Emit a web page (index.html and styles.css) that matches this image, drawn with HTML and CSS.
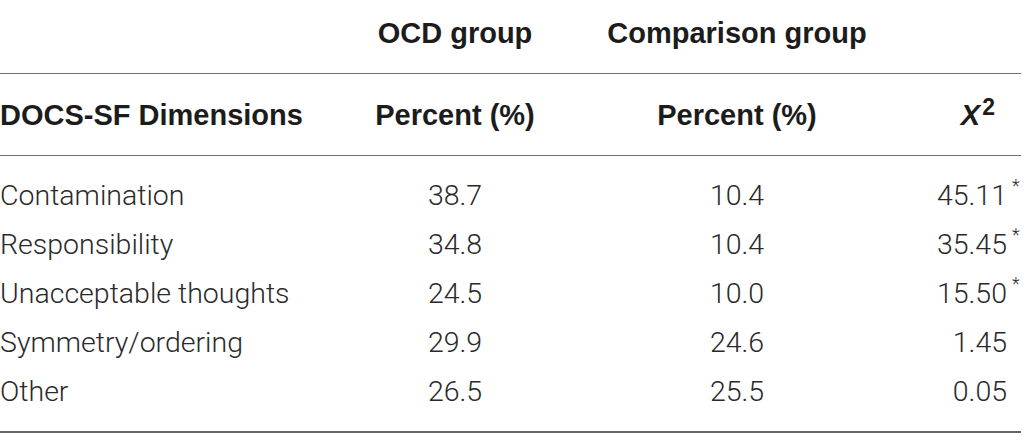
FILE: index.html
```html
<!DOCTYPE html>
<html>
<head>
<meta charset="utf-8">
<link rel="stylesheet" href="styles.css">
</head>
<body>
<table class="data">
  <colgroup>
    <col class="c1"><col class="c2"><col class="c3"><col class="c4">
  </colgroup>
  <thead>
    <tr class="group-row">
      <th></th>
      <th class="center">OCD group</th>
      <th class="center">Comparison group</th>
      <th></th>
    </tr>
    <tr class="label-row">
      <th class="left">DOCS-SF Dimensions</th>
      <th class="center">Percent (%)</th>
      <th class="center">Percent (%)</th>
      <th class="right chi"><i>X</i><sup class="sq">2</sup></th>
    </tr>
  </thead>
  <tbody>
    <tr><td class="left">Contamination</td><td class="center">38.7</td><td class="center">10.4</td><td class="right num">45.11<sup class="star">*</sup></td></tr>
    <tr><td class="left">Responsibility</td><td class="center">34.8</td><td class="center">10.4</td><td class="right num">35.45<sup class="star">*</sup></td></tr>
    <tr><td class="left">Unacceptable thoughts</td><td class="center">24.5</td><td class="center">10.0</td><td class="right num">15.50<sup class="star">*</sup></td></tr>
    <tr><td class="left">Symmetry/ordering</td><td class="center">29.9</td><td class="center">24.6</td><td class="right num">1.45</td></tr>
    <tr><td class="left">Other</td><td class="center">26.5</td><td class="center">25.5</td><td class="right num">0.05</td></tr>
  </tbody>
</table>
</body>
</html>
```

FILE: styles.css
```css
html, body {
  margin: 0;
  padding: 0;
  background: #ffffff;
}

body {
  font-family: "Liberation Sans", Arial, Helvetica, sans-serif;
  color: #333333;
}

.data {
  width: 1021px;
  border-collapse: collapse;
  table-layout: fixed;
  font-size: 28px;
}

.c1 { width: 350px; }
.c2 { width: 210px; }
.c3 { width: 354px; }
.c4 { width: 107px; }

th, td {
  padding: 0;
  white-space: nowrap;
}

th {
  font-size: 29px;
  font-weight: 700;
  color: #1c1c1c;
  line-height: 32px;
}

.left { text-align: left; }
.center { text-align: center; }
.right { text-align: right; }

.group-row th {
  padding-top: 17px;
  padding-bottom: 24px;
  border-bottom: 1px solid #707070;
}

.label-row th {
  padding-top: 25px;
  padding-bottom: 24px;
  border-bottom: 1px solid #707070;
}

.chi {
  padding-right: 26px;
}

.sq {
  font-size: 23px;
  font-style: normal;
  vertical-align: 0;
  position: relative;
  top: -10px;
  line-height: 0;
  margin-left: 2px;
}

td {
  font-family: Roboto, "Liberation Sans", Arial, sans-serif;
  font-weight: 300;
  font-size: 28.5px;
  line-height: 49px;
  color: #2a2a2a;
}

tbody tr:first-child td { padding-top: 15px; }
tbody tr:last-child td {
  padding-bottom: 15px;
  border-bottom: 2px solid #666666;
}

.num {
  padding-right: 14px;
}

.star {
  display: inline-block;
  width: 0;
  text-indent: 5px;
  font-size: 18px;
  line-height: 0;
  vertical-align: 0;
  position: relative;
  top: -13px;
}
```
